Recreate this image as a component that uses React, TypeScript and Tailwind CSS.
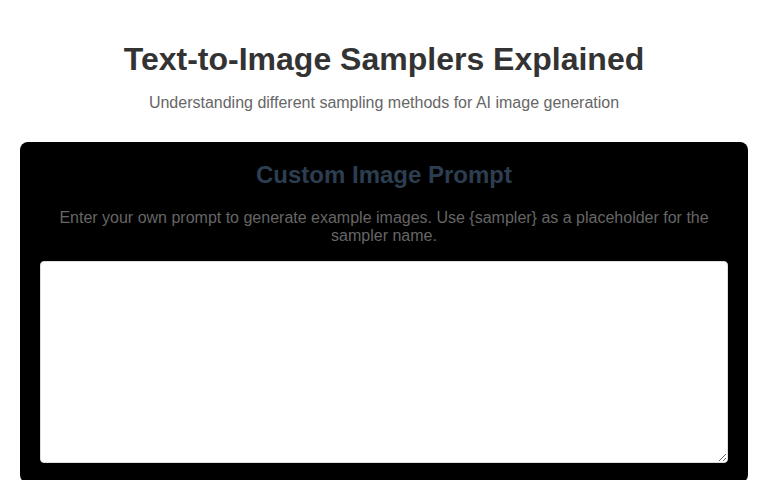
const description =
  'Enter your own prompt to generate example images. Use {sampler} as a placeholder for the sampler name.'

export default function App() {
  return (
    <div className="min-h-screen bg-white px-5 pb-5 font-['Liberation_Sans',Arial,sans-serif]">
      <header className="pt-[41px] text-center">
        <h1 className="text-[32px] leading-[37px] font-bold text-[#333333]">
          Text-to-Image Samplers Explained
        </h1>
        <p className="mt-4 text-base leading-[18px] text-[#666666]">
          Understanding different sampling methods for AI image generation
        </p>
      </header>

      <section className="mt-[30px] rounded-lg bg-black px-5 pt-[19px] pb-5">
        <h2 className="text-center text-2xl leading-7 font-bold text-[#2c3e50]">
          Custom Image Prompt
        </h2>
        <p className="mt-5 text-center text-base leading-[18px] text-[#666666]">{description}</p>
        <textarea className="mt-4 block h-[202px] w-full rounded border border-[#dddddd] bg-white p-2 text-sm" />
      </section>
    </div>
  )
}
